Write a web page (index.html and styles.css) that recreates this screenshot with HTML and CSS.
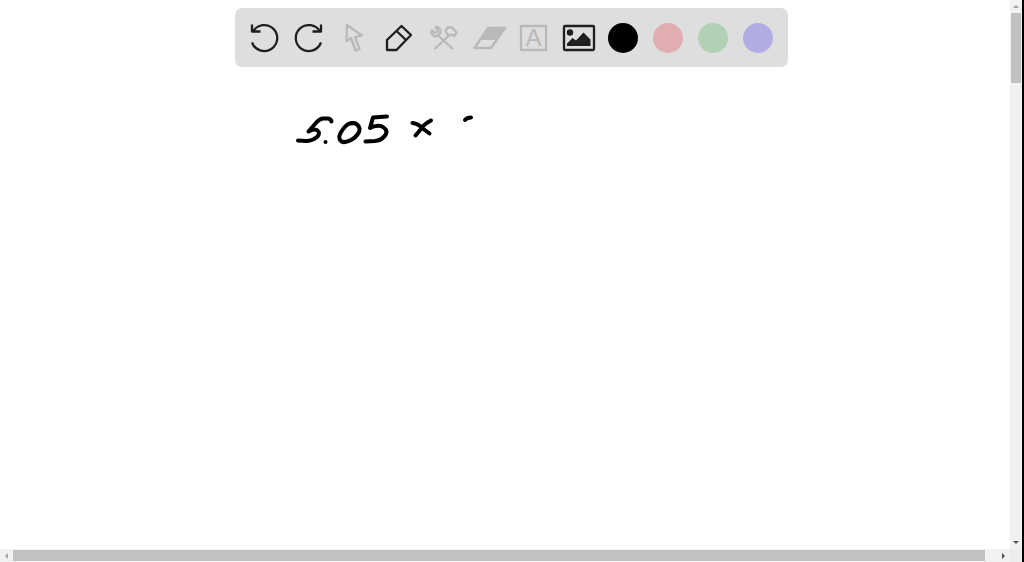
FILE: index.html
```
<!doctype html>
<html lang="en">
    <head>
        <meta charset="utf-8">
        <meta name="viewport" content="width=device-width, initial-scale=1">
        <title>Whiteboard</title>
        <link rel="stylesheet" href="styles.css">
    </head>
    <body>
        <div class="app">
            <main class="board">
                <svg class="ink" viewBox="290 110 190 40" role="img" aria-label="5.05 x">
                    <path d="M331.5 121.5Q331 119 328 118.5L323 118.5Q319 119 315 124L308.5 131.5Q313 128.5 317 130Q321 133 317 137Q312 141 306 141L298 140.5" />
                    <path d="M325.5 142V142" />
                    <path d="M352 123C346 123 337 135 340 140C343 145 355 140 359 132C361 126 356 122 351 123.5" />
                    <path d="M387 116.5L373 117.5L370 128Q375 125 381 126Q388 129 386 134Q383 140 375 141L365.5 141.5" />
                    <path d="M412.5 123Q419 124 422 128L429.5 133.5M431 120.5Q424 124 421 129L415.5 135.5" />
                    <path d="M465 120Q467 117.5 471 117.5" />
                </svg>
            </main>
            <div class="scrollbar vertical">
                <button class="arrow up" aria-label="Scroll up"></button>
                <div class="track"><div class="thumb"></div></div>
                <button class="arrow down" aria-label="Scroll down"></button>
            </div>
            <div class="scrollbar horizontal">
                <button class="arrow left" aria-label="Scroll left"></button>
                <div class="track"><div class="thumb"></div></div>
                <button class="arrow right" aria-label="Scroll right"></button>
            </div>
            <div class="corner"></div>
        </div>
        <div class="toolbar" role="toolbar" aria-label="Drawing tools">
            <button class="tool" aria-label="Undo">
                <svg viewBox="0 0 36 36"><path d="M6 22.5A13 13 0 1 0 7 11.5M6 4.500V11.5H14.5" /></svg>
            </button>
            <button class="tool" aria-label="Redo">
                <svg viewBox="0 0 36 36"><path d="M30 22.5A13 13 0 1 1 29 11.5M30 4.500V11.5H21.5" /></svg>
            </button>
            <button class="tool off" aria-label="Select">
                <svg viewBox="0 0 36 36"><path d="M11 5L10.5 21L15 18L19.5 30.5L23.5 29L19 17L26 15.5Z" /></svg>
            </button>
            <button class="tool" aria-label="Pen">
                <svg viewBox="0 0 36 36"><path d="M20.5 6L30 15L15.5 30H6V20ZM15.5 11L25 20" /></svg>
            </button>
            <button class="tool off" aria-label="Tools">
                <svg viewBox="0 0 36 36">
                    <path d="M9 7.5L11.5 9.5V12L9 13L6 10.5Q4.5 13 7 15.5Q9.5 17 12 15.5L27 29M12 15.5Q15.500 13 14 9Q12 6 9 7.500M8.5 29L24 14.5" />
                    <path d="M19.5 11L21.5 7.5H26L30.5 12.5L28 16L25.5 14.5L22.5 16Z" />
                </svg>
            </button>
            <button class="tool off" aria-label="Eraser">
                <svg viewBox="0 0 36 36">
                    <path d="M17 8H34L20 28H3.5Z" />
                    <path class="solid" d="M17 7H35.5L26 20H8Z" />
                </svg>
            </button>
            <button class="tool off" aria-label="Text">
                <svg viewBox="0 0 36 36">
                    <rect x="6" y="6" width="25" height="24" />
                    <text x="18.5" y="26">A</text>
                </svg>
            </button>
            <button class="tool" aria-label="Image">
                <svg viewBox="0 0 36 36">
                    <rect x="4" y="6" width="30" height="24" rx="1" />
                    <circle class="solid" cx="10" cy="12.5" r="3.2" />
                    <path class="solid" d="M7 26V23.5L12.5 18L16 20.5L23.5 12.5L30.5 19.5V26Z" />
                </svg>
            </button>
            <button class="tool" aria-label="Black"><span class="swatch black"></span></button>
            <button class="tool" aria-label="Red"><span class="swatch red"></span></button>
            <button class="tool" aria-label="Green"><span class="swatch green"></span></button>
            <button class="tool" aria-label="Blue"><span class="swatch blue"></span></button>
        </div>
    </body>
</html>
```
FILE: styles.css
```
* {
    box-sizing: border-box;
    margin: 0;
    padding: 0;
}

body {
    background: #fff;
    font-family: Roboto, "Liberation Sans", sans-serif;
}

button {
    border: 0;
    background: transparent;
    cursor: pointer;
}

.app {
    display: grid;
    grid-template-columns: minmax(0, 1fr) 12px;
    grid-template-rows: minmax(0, 1fr) 13px;
    height: 100vh;
    border-right: 2px solid #000;
}

.board {
    padding: 110px 0 0 290px;
    overflow: hidden;
}

.ink {
    display: block;
    width: 190px;
    height: 40px;
    fill: none;
    stroke: #000;
    stroke-width: 4;
    stroke-linecap: round;
    stroke-linejoin: round;
}

/* toolbar floats over the board */
.toolbar {
    position: absolute;
    top: 8px;
    left: 0;
    right: 2px;
    display: grid;
    grid-template-columns: repeat(12, minmax(0, 1fr));
    width: 553px;
    max-width: 100%;
    height: 59px;
    margin: 0 auto;
    padding: 0 7px;
    border-radius: 7px;
    background: #dedede;
}

.tool {
    display: flex;
    align-items: center;
    justify-content: center;
    color: #1d1f21;
}

.tool.off {
    color: #b9b9b9;
}

.tool svg {
    flex: none;
    width: 36px;
    height: 36px;
    fill: none;
    stroke: currentColor;
    stroke-width: 2.3;
    stroke-linejoin: round;
}

.tool .solid {
    fill: currentColor;
    stroke: none;
}

.tool text {
    fill: currentColor;
    stroke: none;
    font-size: 24px;
    text-anchor: middle;
}

.swatch {
    flex: none;
    width: 30px;
    height: 30px;
    border-radius: 50%;
}

.black {
    background: #000;
}

.red {
    background: #e0adb1;
}

.green {
    background: #b2d1b4;
}

.blue {
    background: #b1ade2;
}

.scrollbar {
    display: flex;
    background: #f1f1f1;
}

.vertical {
    flex-direction: column;
    padding: 0 1px;
}

.horizontal {
    padding: 1px 0;
}

.corner {
    background: #ececec;
}

.track {
    flex: 1;
}

.thumb {
    background: #c1c1c1;
}

.vertical .thumb {
    height: 70px;
}

.horizontal .track {
    padding-right: 12px;
}

.horizontal .thumb {
    height: 100%;
}

.arrow {
    display: flex;
    flex: none;
    align-items: center;
    justify-content: center;
    width: 13px;
    height: 11px;
}

.vertical .arrow {
    width: 10px;
    height: 13px;
}

.arrow::before {
    content: "";
    border: 3px solid transparent;
}

.up::before {
    border-top: 0;
    border-bottom-color: #a3a3a3;
}

.down::before {
    border-bottom: 0;
    border-top-color: #505050;
}

.left::before {
    border-left: 0;
    border-right-color: #a3a3a3;
}

.right::before {
    border-right: 0;
    border-left-color: #505050;
}
```
